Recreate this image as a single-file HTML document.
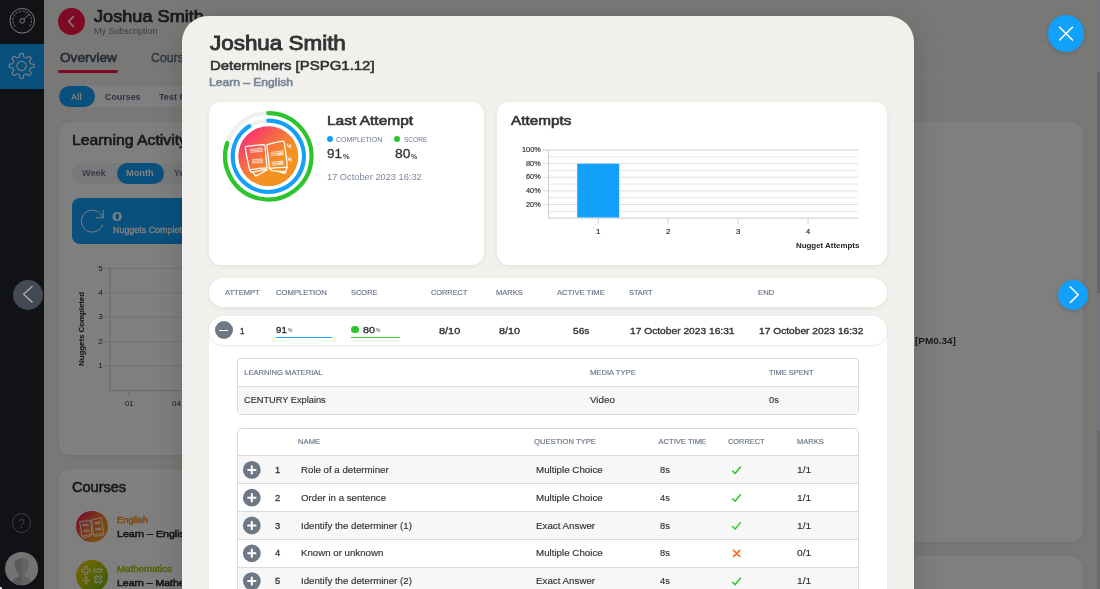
<!DOCTYPE html>
<html><head><meta charset="utf-8"><title>Joshua Smith</title><style>
html,body{margin:0;padding:0}
body{width:1100px;height:589px;overflow:hidden;position:relative;background:#f1f0ec;font-family:"Liberation Sans",sans-serif;}
.t{position:absolute;white-space:nowrap;line-height:1;transform-origin:0 0}
.a{position:absolute}
svg{position:absolute;overflow:visible}
#bg{position:absolute;left:0;top:0;width:1100px;height:589px;overflow:hidden;will-change:transform}
#ov{position:absolute;left:0;top:0;width:1100px;height:589px;background:rgba(0,0,0,.5)}
#modal{position:absolute;left:182px;top:16px;width:732px;height:640px;background:#f1f0ec;border-radius:26px;box-shadow:0 6px 30px rgba(0,0,0,.17)}
#mw{position:absolute;left:0;top:0;width:1100px;height:589px;overflow:hidden;will-change:transform}
.card{position:absolute;background:#fff;border-radius:12px;box-shadow:0 1px 4px rgba(0,0,0,.07)}
</style></head><body>
<div id="bg">
<div class="a" style="left:0;top:0;width:44px;height:589px;background:#20242c"></div>
<div class="a" style="left:0;top:44px;width:44px;height:45px;background:#13a0fa"></div>
<div class="a" style="left:44px;top:44.5px;width:1056px;height:1px;background:#fbfaf8"></div>
<div class="a" style="left:58px;top:71.5px;width:1030px;height:1px;background:#fbfaf8"></div>
<div class="a" style="left:58px;top:8px;width:27px;height:27px;border-radius:50%;background:#ff1446"></div>
<svg style="left:58px;top:8px" width="27" height="27"><path d="M15.3 8.6 L10.6 13.5 L15.3 18.4" fill="none" stroke="#fff" stroke-width="1.6" stroke-linecap="round" stroke-linejoin="round"/></svg>
<div class="t" style="left:94.10px;top:8.66px;font-size:16px;color:#333;transform:scaleX(1.1338);-webkit-text-stroke:0.72px #333;">Joshua Smith</div>
<div class="t" style="left:94.10px;top:26.90px;font-size:8.5px;color:#6f7c93;transform:scaleX(1.0502);">My Subscription</div>
<div class="t" style="left:59.60px;top:51.20px;font-size:13px;color:#4a5568;transform:scaleX(1.0503);-webkit-text-stroke:0.58px #4a5568;">Overview</div>
<div class="t" style="left:150.70px;top:51.20px;font-size:13px;color:#5d6a80;transform:scaleX(0.9462);-webkit-text-stroke:.35px #5d6a80;">Courses</div>
<div class="a" style="left:58px;top:70px;width:60px;height:3px;border-radius:2px;background:#ff1446"></div>
<div class="a" style="left:58.5px;top:86px;width:300px;height:21px;border-radius:11px;background:#fff;opacity:.95"></div>
<div class="a" style="left:58.8px;top:86px;width:36.3px;height:21.3px;border-radius:11px;background:#13a0fa"></div>
<div class="t" style="left:71.10px;top:92.98px;font-size:9px;color:#fff;font-weight:700;transform:scaleX(0.9478);">All</div>
<div class="t" style="left:104.70px;top:92.98px;font-size:9px;color:#5d6a80;font-weight:700;transform:scaleX(0.9858);">Courses</div>
<div class="t" style="left:159.40px;top:92.98px;font-size:9px;color:#5d6a80;font-weight:700;transform:scaleX(1.0044);">Test Practice</div>
<div class="card" style="left:58.5px;top:122px;width:840px;height:333px"></div>
<div class="t" style="left:71.50px;top:132.65px;font-size:14px;color:#333;transform:scaleX(1.1281);-webkit-text-stroke:0.63px #333;">Learning Activity</div>
<div class="a" style="left:71.5px;top:162.7px;width:140px;height:21.2px;border-radius:11px;background:#f2f2f2"></div>
<div class="t" style="left:82.20px;top:168.98px;font-size:9px;color:#6f7c93;font-weight:700;transform:scaleX(1.0151);">Week</div>
<div class="a" style="left:116.6px;top:162.7px;width:47.1px;height:21.2px;border-radius:11px;background:#13a0fa"></div>
<div class="t" style="left:126.30px;top:168.98px;font-size:9px;color:#fff;font-weight:700;transform:scaleX(1.0265);">Month</div>
<div class="t" style="left:174.40px;top:168.98px;font-size:9px;color:#6f7c93;font-weight:700;transform:scaleX(0.9779);">Year</div>
<div class="a" style="left:71.5px;top:198.4px;width:200px;height:46px;border-radius:8px;background:#13a0fa"></div>
<svg style="left:80px;top:209px" width="26" height="26"><path d="M22.9 8.8 A11 11 0 1 0 22.7 16" fill="none" stroke="#fff" stroke-width="1" stroke-linecap="round"/><path d="M16.2 8.8 L23.2 8.8 L23.2 1.3" fill="none" stroke="#fff" stroke-width="1" stroke-linecap="round" stroke-linejoin="round"/></svg>
<div class="t" style="left:112.20px;top:209.87px;font-size:13.5px;color:#fff;font-weight:700;transform:scaleX(1.3853);">0</div>
<div class="t" style="left:112.80px;top:225.58px;font-size:9px;color:#fff;transform:scaleX(0.9894);-webkit-text-stroke:.3px #fff;">Nuggets Completed</div>
<div class="t" style="left:98.30px;top:264.53px;font-size:8px;color:#333;">5</div>
<div class="t" style="left:98.30px;top:289.03px;font-size:8px;color:#333;">4</div>
<div class="t" style="left:98.30px;top:313.33px;font-size:8px;color:#333;">3</div>
<div class="t" style="left:98.30px;top:337.63px;font-size:8px;color:#333;">2</div>
<div class="t" style="left:98.30px;top:361.73px;font-size:8px;color:#333;">1</div>
<svg style="left:0;top:0" width="1100" height="589"><line x1="103" y1="268.4" x2="600" y2="268.4" stroke="#e0e4e9" stroke-width="1"/><line x1="103" y1="292.9" x2="600" y2="292.9" stroke="#e0e4e9" stroke-width="1"/><line x1="103" y1="317.2" x2="600" y2="317.2" stroke="#e0e4e9" stroke-width="1"/><line x1="103" y1="341.5" x2="600" y2="341.5" stroke="#e0e4e9" stroke-width="1"/><line x1="103" y1="365.6" x2="600" y2="365.6" stroke="#e0e4e9" stroke-width="1"/><line x1="109.8" y1="268.4" x2="109.8" y2="390.7" stroke="#ccd3db" stroke-width="1"/><line x1="109.8" y1="390.7" x2="600" y2="390.7" stroke="#ccd3db" stroke-width="1"/><line x1="128.9" y1="390.7" x2="128.9" y2="395" stroke="#ccd3db" stroke-width="1"/><line x1="176" y1="390.7" x2="176" y2="395" stroke="#ccd3db" stroke-width="1"/></svg>
<div class="t" style="left:124.60px;top:399.63px;font-size:8px;color:#333;transform:scaleX(0.9666);">01</div>
<div class="t" style="left:171.60px;top:399.63px;font-size:8px;color:#333;transform:scaleX(0.9890);">04</div>
<div class="t" style="left:82.4px;top:329.4px;font-size:8px;font-weight:700;color:#222;transform-origin:50% 50%;transform:translate(-50%,-50%) rotate(-90deg);letter-spacing:-0.1px">Nuggets Completed</div>
<div class="card" style="left:58.5px;top:469px;width:840px;height:200px"></div>
<div class="t" style="left:71.60px;top:480.05px;font-size:14px;color:#333;transform:scaleX(1.0378);-webkit-text-stroke:0.63px #333;">Courses</div>
<div class="a" style="left:76.3px;top:510.6px;width:31.8px;height:31.8px;border-radius:50%;background:linear-gradient(128deg,#f2185c 10%,#f46c34 42%,#f59320 72%)"></div>
<div class="a" style="left:76.3px;top:559.8px;width:31.8px;height:31.8px;border-radius:50%;background:linear-gradient(135deg,#e6c800 10%,#b8c400 50%,#6fb51c 95%)"></div>
<svg style="left:76.3px;top:510.6px" width="32" height="32" viewBox="-16 -16 32 32"><g transform="scale(1.16)" fill="none" stroke="#fff" stroke-width="0.85" stroke-linejoin="round" opacity=".9"><path d="M-10.6 -4.6 L-1.2 -5.6 L-0.2 6.2 L-8.6 8 Z"/><path d="M-0.4 -6.2 L8 -8 L10.2 5.4 L1.2 6.6 Z"/><path d="M-8.6 8 L-7.4 9.4 L-0.2 7.4 M1.2 6.6 L2 8 L9.6 7.2 L10.2 5.4"/><path d="M-8.4 -2.4h5.4M-8.2 -1.2h5.4M-7.4 2.6h5.2M-7.2 3.8h5.2M2 -3.6l5-.8M2.2 -2.4l5-.8M2.8 1.6l5.2-.8M3 2.8l5.2-.8"/></g></svg>
<svg style="left:76.3px;top:559.8px" width="32" height="32" viewBox="-16 -16 32 32"><g transform="scale(1.05)" fill="none" stroke="#fff" stroke-width="1.1" stroke-linejoin="round" opacity=".85"><path d="M-7 -9h2.4v2.6h2.6v2.4h-2.6v2.6h-2.4v-2.6h-2.6v-2.4h2.6z"/><rect x="1" y="-6.6" width="8.6" height="2.6" rx="1.3"/><path d="M-9.4 4.2h7.6"/><circle cx="-5.6" cy="1.8" r=".8"/><circle cx="-5.6" cy="6.6" r=".8"/><path d="M2.4 1.2l1.6-1.6 2 2 2-2 1.6 1.6-2 2 2 2-1.6 1.6-2-2-2 2-1.6-1.6 2-2z"/></g></svg>
<div class="t" style="left:117.10px;top:515.07px;font-size:9.6px;color:#f58c1c;transform:scaleX(0.9846);-webkit-text-stroke:0.43px #f58c1c;">English</div>
<div class="t" style="left:117.10px;top:528.99px;font-size:9.7px;color:#2e2e2e;transform:scaleX(1.0964);-webkit-text-stroke:.55px #2e2e2e;">Learn – English</div>
<div class="t" style="left:117.10px;top:564.37px;font-size:9.6px;color:#9cc810;transform:scaleX(1.0089);-webkit-text-stroke:0.43px #9cc810;">Mathematics</div>
<div class="t" style="left:117.10px;top:578.29px;font-size:9.7px;color:#2e2e2e;transform:scaleX(1.0809);-webkit-text-stroke:.55px #2e2e2e;">Learn – Mathematics</div>
<div class="card" style="left:905px;top:121.5px;width:178px;height:420px"></div>
<div class="card" style="left:905px;top:555.5px;width:178px;height:100px"></div>
<div class="t" style="left:914.60px;top:335.67px;font-size:9.6px;color:#333;font-weight:700;transform:scaleX(1.0336);">[PM0.34]</div>
<svg style="left:0;top:0" width="44" height="44"><g fill="none" stroke="#fff" stroke-width="1" opacity=".98">
<circle cx="22.2" cy="20.8" r="12.3"/><circle cx="22.2" cy="20.8" r="2.3"/><path d="M23.9 19.2 L29 14.4" stroke-linecap="round"/>
<path d="M15.2 26.6 A9.3 9.3 0 1 1 29.2 26.6" stroke-dasharray="2.2 1.4"/></g></svg>
<svg style="left:0;top:44px" width="44" height="45"><g fill="none" stroke="#fff" stroke-width="1.1" stroke-linejoin="round"><path d="M19.45 12.95 L19.95 9.61 L23.25 9.61 L23.75 12.95 L26.41 14.06 L29.12 12.04 L31.46 14.38 L29.44 17.09 L30.55 19.75 L33.89 20.25 L33.89 23.55 L30.55 24.05 L29.44 26.71 L31.46 29.42 L29.12 31.76 L26.41 29.74 L23.75 30.85 L23.25 34.19 L19.95 34.19 L19.45 30.85 L16.79 29.74 L14.08 31.76 L11.74 29.42 L13.76 26.71 L12.65 24.05 L9.31 23.55 L9.31 20.25 L12.65 19.75 L13.76 17.09 L11.74 14.38 L14.08 12.04 L16.79 14.06Z"/><circle cx="21.6" cy="21.9" r="4.7"/></g></svg>
<div class="a" style="left:11.6px;top:513.4px;width:17.4px;height:17.4px;border:1.3px solid #7c7c7c;border-radius:50%"></div>
<div class="t" style="left:18.30px;top:517.54px;font-size:12px;color:#7c7c7c;">?</div>
<svg style="left:5.3px;top:551.7px" width="33.2" height="33.2" viewBox="-16.6 -16.6 33.2 33.2"><defs><clipPath id="avc"><circle r="16.6"/></clipPath></defs>
<circle r="16.6" fill="#e6e6e6"/><g clip-path="url(#avc)"><path d="M-7 -5.5 C-7 -11.5 7 -11.5 7 -5.5 C7 1 4.5 4 2.6 5.4 L2.6 8 C6 9 9.5 10.5 10.5 17 L-10.5 17 C-9.5 10.5 -6 9 -2.6 8 L-2.6 5.4 C-4.5 4 -7 1 -7 -5.5Z" fill="#b2b2b4"/><path d="M0 -10 C3.5 -10 7 -9 7 -5.5 C7 1 4.5 4 2.6 5.4 L2.6 8 C6 9 9.5 10.5 10.5 17 L0 17Z" fill="#c6c6c6"/></g></svg>
<div class="a" style="left:1096.5px;top:0;width:3.5px;height:430.5px;background:#e6edf6"></div>
<div class="a" style="left:1096.5px;top:72px;width:3.5px;height:220.5px;background:#c4cede;border-radius:2px 0 0 2px"></div>
<div class="a" style="left:1096.5px;top:430.5px;width:3.5px;height:160px;background:#d8d8d4"></div>
</div>
<div id="ov"></div>
<div id="mw"><div id="modal"></div>
<div class="t" style="left:209.60px;top:32.90px;font-size:20.2px;color:#333;transform:scaleX(1.1105);-webkit-text-stroke:0.91px #333;">Joshua Smith</div>
<div class="t" style="left:209.60px;top:59.34px;font-size:13.3px;color:#333;transform:scaleX(1.1247);-webkit-text-stroke:0.60px #333;">Determiners [PSPG1.12]</div>
<div class="t" style="left:208.80px;top:76.69px;font-size:11px;color:#78859a;transform:scaleX(1.0976);-webkit-text-stroke:.62px #78859a;">Learn – English</div>
<div class="card" style="left:209.2px;top:102.4px;width:274.4px;height:163px"></div>
<div class="card" style="left:497.2px;top:102.4px;width:389.6px;height:163px"></div>
<svg style="left:0;top:0" width="1100" height="589"><defs><linearGradient id="eg" x1="0.1" y1="0.18" x2="0.8" y2="0.9"><stop offset="0.05" stop-color="#f83c6c"/><stop offset=".38" stop-color="#f66f40"/><stop offset=".68" stop-color="#f59122"/></linearGradient></defs>
<circle cx="268.3" cy="156.3" r="43.2" fill="none" stroke="#eef0f2" stroke-width="4"/>
<circle cx="268.3" cy="156.3" r="35.6" fill="none" stroke="#eef0f2" stroke-width="4"/>
<path d="M268.3 113.10000000000001 A43.2 43.2 0 1 1 227.21 142.95" fill="none" stroke="#2dc52d" stroke-width="4.2" stroke-linecap="round"/>
<path d="M268.3 120.70000000000002 A35.6 35.6 0 1 1 249.22 126.24" fill="none" stroke="#13a0fa" stroke-width="4.2" stroke-linecap="round"/>
<circle cx="268.3" cy="156.3" r="30" fill="url(#eg)"/>
<g transform="translate(268.3,156.3)" fill="none" stroke="#fff" stroke-width="1.25" stroke-linejoin="round" stroke-linecap="round">
<path d="M-21.6 -10 C-16 -10.9 -9 -11.5 -4.6 -11.7 Q-3.4 -11.7 -3.3 -10.4 C-2.8 -3 -2 5 -1.2 11.6 C-6 11.6 -13 12.4 -18.6 13.6 C-20.2 7 -22.2 -2 -23 -8.6 Q-23 -9.8 -21.6 -10Z"/>
<path d="M-0.2 -11.9 C4 -13 10 -14.4 14.4 -15.1 Q15.6 -15.2 15.9 -14 C17.2 -6 18.4 3 18.9 11 C13 10.8 6 11.4 1.2 12.1 C0.4 4 -0.6 -4 -1.4 -11.4 Q-1.2 -11.8 -0.2 -11.9Z"/>
<path d="M-18.6 13.6 L-17 16.1 L-1.8 12.8 M-15.4 15.8 L-12.6 19.8 L-0.8 13.4"/>
<path d="M1.2 12.1 L3.4 14.4 L17.2 15.5 L18.9 11 M9 14.9 L16.6 17.1 L17.7 15.4"/>
<path d="M-18 -7l11.8-1.1M-17.8 -5.5l11.8-1.1M-17.6 -4l11.8-1.1M-16 3.6l10.2-.9M-15.8 5.2l10.2-.9M-15.6 6.8l10.2-.9" stroke-width=".7"/>
<path d="M2.6 -3.9l12.4-1.4M2.8 -2.3l12.4-1.4M3 -0.7l12.4-1.4M3.6 6l11-1.4M3.8 7.5l11-1.4M4 9l11-1.4" stroke-width=".7"/>
<path d="M9.6 -4.6l2 4 1.4-3.6 1.6 3M10 5.2l1.8 3.4 1.4-3.4 1.2 2.4" stroke-width=".8"/>
<path d="M18.9 -12.3l1.5 3.5 1.5-3 .9 3.6M19.4 .6l1.4 3.9 1.5-3.2.8 3.9" stroke-width=".85"/>
</g></svg>
<div class="t" style="left:326.80px;top:113.64px;font-size:13.3px;color:#333;transform:scaleX(1.1647);-webkit-text-stroke:0.60px #333;">Last Attempt</div>
<div class="a" style="left:326.8px;top:136.4px;width:5.8px;height:5.8px;border-radius:50%;background:#13a0fa"></div>
<div class="t" style="left:335.90px;top:136.22px;font-size:7.3px;color:#6a7689;transform:scaleX(0.9572);">COMPLETION</div>
<div class="a" style="left:394.4px;top:136.4px;width:5.8px;height:5.8px;border-radius:50%;background:#2dc52d"></div>
<div class="t" style="left:403.50px;top:136.22px;font-size:7.3px;color:#6a7689;transform:scaleX(0.8975);">SCORE</div>
<div class="t" style="left:326.80px;top:148.06px;font-size:12.8px;color:#333;transform:scaleX(1.0466);-webkit-text-stroke:.3px #333;">91</div>
<div class="t" style="left:343.00px;top:152.64px;font-size:7.4px;color:#444;font-weight:700;">%</div>
<div class="t" style="left:394.70px;top:148.06px;font-size:12.8px;color:#333;transform:scaleX(1.0888);-webkit-text-stroke:.3px #333;">80</div>
<div class="t" style="left:411.00px;top:152.64px;font-size:7.4px;color:#444;font-weight:700;transform:scaleX(0.9422);">%</div>
<div class="t" style="left:326.80px;top:172.67px;font-size:8.9px;color:#7a879b;transform:scaleX(1.0435);">17 October 2023 16:32</div>
<div class="t" style="left:510.90px;top:113.74px;font-size:13.3px;color:#333;transform:scaleX(1.1491);-webkit-text-stroke:0.60px #333;">Attempts</div>
<svg style="left:0;top:0" width="1100" height="589"><line x1="548.4" y1="211.30" x2="858.2" y2="211.30" stroke="#e6e9ed" stroke-width="1"/><line x1="542.7" y1="204.50" x2="858.2" y2="204.50" stroke="#dce0e6" stroke-width="1"/><line x1="548.4" y1="197.70" x2="858.2" y2="197.70" stroke="#e6e9ed" stroke-width="1"/><line x1="542.7" y1="190.90" x2="858.2" y2="190.90" stroke="#dce0e6" stroke-width="1"/><line x1="548.4" y1="184.10" x2="858.2" y2="184.10" stroke="#e6e9ed" stroke-width="1"/><line x1="542.7" y1="177.30" x2="858.2" y2="177.30" stroke="#dce0e6" stroke-width="1"/><line x1="548.4" y1="170.50" x2="858.2" y2="170.50" stroke="#e6e9ed" stroke-width="1"/><line x1="542.7" y1="163.70" x2="858.2" y2="163.70" stroke="#dce0e6" stroke-width="1"/><line x1="548.4" y1="156.90" x2="858.2" y2="156.90" stroke="#e6e9ed" stroke-width="1"/><line x1="542.7" y1="150.10" x2="858.2" y2="150.10" stroke="#c8cfd8" stroke-width="1"/><rect x="577.2" y="163.70" width="42" height="53.90" fill="#13a0fa"/><line x1="548.4" y1="150.1" x2="548.4" y2="218.1" stroke="#c4ccd6" stroke-width="1"/><line x1="547.9" y1="218.1" x2="858.2" y2="218.1" stroke="#c4ccd6" stroke-width="1"/><line x1="598.3" y1="218.6" x2="598.3" y2="224.1" stroke="#ccd3dc" stroke-width="1"/><line x1="668.2" y1="218.6" x2="668.2" y2="224.1" stroke="#ccd3dc" stroke-width="1"/><line x1="738.1" y1="218.6" x2="738.1" y2="224.1" stroke="#ccd3dc" stroke-width="1"/><line x1="808" y1="218.6" x2="808" y2="224.1" stroke="#ccd3dc" stroke-width="1"/></svg>
<div class="t" style="left:525.85px;top:200.63px;font-size:8px;color:#333;transform:scaleX(0.9150);-webkit-text-stroke:.2px #333;">20%</div>
<div class="t" style="left:525.85px;top:187.03px;font-size:8px;color:#333;transform:scaleX(0.9150);-webkit-text-stroke:.2px #333;">40%</div>
<div class="t" style="left:525.85px;top:173.43px;font-size:8px;color:#333;transform:scaleX(0.9150);-webkit-text-stroke:.2px #333;">60%</div>
<div class="t" style="left:525.85px;top:159.83px;font-size:8px;color:#333;transform:scaleX(0.9150);-webkit-text-stroke:.2px #333;">80%</div>
<div class="t" style="left:521.78px;top:146.23px;font-size:8px;color:#333;transform:scaleX(0.9150);-webkit-text-stroke:.2px #333;">100%</div>
<div class="t" style="left:596.10px;top:227.73px;font-size:8px;color:#333;-webkit-text-stroke:.2px #333;">1</div>
<div class="t" style="left:666.00px;top:227.73px;font-size:8px;color:#333;-webkit-text-stroke:.2px #333;">2</div>
<div class="t" style="left:735.90px;top:227.73px;font-size:8px;color:#333;-webkit-text-stroke:.2px #333;">3</div>
<div class="t" style="left:805.80px;top:227.73px;font-size:8px;color:#333;-webkit-text-stroke:.2px #333;">4</div>
<div class="t" style="left:796.40px;top:242.00px;font-size:7.8px;color:#222;font-weight:700;transform:scaleX(1.0122);">Nugget Attempts</div>
<div class="card" style="left:209.2px;top:278.2px;width:677.6px;height:28.6px;border-radius:14.3px"></div>
<div class="t" style="left:225.20px;top:289.17px;font-size:7.6px;color:#6a7689;transform:scaleX(0.9943);-webkit-text-stroke:.18px #6a7689;">ATTEMPT</div>
<div class="t" style="left:275.90px;top:289.17px;font-size:7.6px;color:#6a7689;transform:scaleX(1.0110);-webkit-text-stroke:.18px #6a7689;">COMPLETION</div>
<div class="t" style="left:350.50px;top:289.17px;font-size:7.6px;color:#6a7689;transform:scaleX(0.9805);-webkit-text-stroke:.18px #6a7689;">SCORE</div>
<div class="t" style="left:431.00px;top:289.17px;font-size:7.6px;color:#6a7689;transform:scaleX(0.9687);-webkit-text-stroke:.18px #6a7689;">CORRECT</div>
<div class="t" style="left:496.20px;top:289.17px;font-size:7.6px;color:#6a7689;transform:scaleX(0.9916);-webkit-text-stroke:.18px #6a7689;">MARKS</div>
<div class="t" style="left:557.20px;top:289.17px;font-size:7.6px;color:#6a7689;transform:scaleX(1.0047);-webkit-text-stroke:.18px #6a7689;">ACTIVE TIME</div>
<div class="t" style="left:628.90px;top:289.17px;font-size:7.6px;color:#6a7689;transform:scaleX(0.9707);-webkit-text-stroke:.18px #6a7689;">START</div>
<div class="t" style="left:758.10px;top:289.17px;font-size:7.6px;color:#6a7689;-webkit-text-stroke:.18px #6a7689;">END</div>
<div class="a" style="left:209.2px;top:330px;width:677.6px;height:300px;background:#fff"></div>
<div class="a" style="left:209.2px;top:315.8px;width:677.6px;height:29.6px;border-radius:14.8px;background:#fff;box-shadow:0 1px 3px rgba(0,0,0,.10)"></div>
<div class="a" style="left:214.5px;top:321.2px;width:18.2px;height:18.2px;border-radius:50%;background:#6d7885"></div>
<div class="a" style="left:219.2px;top:329.6px;width:9.2px;height:1.8px;border-radius:1px;background:#fff"></div>
<div class="t" style="left:240.00px;top:326.04px;font-size:9.4px;color:#333;transform:scaleX(0.8609);-webkit-text-stroke:.36px #333;">1</div>
<div class="t" style="left:275.90px;top:324.74px;font-size:9.4px;color:#333;transform:scaleX(1.0330);-webkit-text-stroke:.36px #333;">91</div>
<div class="t" style="left:287.80px;top:327.45px;font-size:6.2px;color:#777;font-weight:700;transform:scaleX(0.8162);">%</div>
<div class="a" style="left:275.9px;top:336.5px;width:55.8px;height:1.4px;background:#27a8fb"></div>
<div class="a" style="left:350.9px;top:325.7px;width:7.8px;height:7.8px;border-radius:50%;background:#2dc52d"></div>
<div class="t" style="left:363.00px;top:324.74px;font-size:9.4px;color:#333;transform:scaleX(1.1478);-webkit-text-stroke:.36px #333;">80</div>
<div class="t" style="left:375.80px;top:327.45px;font-size:6.2px;color:#777;font-weight:700;transform:scaleX(0.7981);">%</div>
<div class="a" style="left:350.5px;top:336.5px;width:49.5px;height:1.4px;background:#3cc93c"></div>
<div class="t" style="left:438.90px;top:326.04px;font-size:9.4px;color:#333;transform:scaleX(1.1644);-webkit-text-stroke:.36px #333;">8/10</div>
<div class="t" style="left:498.80px;top:326.04px;font-size:9.4px;color:#333;transform:scaleX(1.1589);-webkit-text-stroke:.36px #333;">8/10</div>
<div class="t" style="left:572.90px;top:326.04px;font-size:9.4px;color:#333;transform:scaleX(1.0822);-webkit-text-stroke:.36px #333;">56s</div>
<div class="t" style="left:629.50px;top:326.04px;font-size:9.4px;color:#333;transform:scaleX(1.0899);-webkit-text-stroke:.36px #333;">17 October 2023 16:31</div>
<div class="t" style="left:758.50px;top:326.04px;font-size:9.4px;color:#333;transform:scaleX(1.0889);-webkit-text-stroke:.36px #333;">17 October 2023 16:32</div>
<div class="a" style="left:237px;top:358.4px;width:620.2px;height:54.9px;border:1px solid #d6dae2;border-radius:4px;background:#fff;overflow:hidden"><div class="a" style="left:0;top:26.3px;width:621px;height:29px;background:#f7f7f7;border-top:1px solid #d6dae2"></div></div>
<div class="t" style="left:244.20px;top:369.07px;font-size:7.6px;color:#6a7689;-webkit-text-stroke:.18px #6a7689;">LEARNING MATERIAL</div>
<div class="t" style="left:589.60px;top:369.07px;font-size:7.6px;color:#6a7689;transform:scaleX(1.0072);-webkit-text-stroke:.18px #6a7689;">MEDIA TYPE</div>
<div class="t" style="left:769.30px;top:369.07px;font-size:7.6px;color:#6a7689;transform:scaleX(0.9758);-webkit-text-stroke:.18px #6a7689;">TIME SPENT</div>
<div class="t" style="left:244.20px;top:396.01px;font-size:9.2px;color:#333;transform:scaleX(1.0041);-webkit-text-stroke:.16px #333;">CENTURY Explains</div>
<div class="t" style="left:589.60px;top:396.01px;font-size:9.2px;color:#333;transform:scaleX(1.0658);-webkit-text-stroke:.16px #333;">Video</div>
<div class="t" style="left:769.30px;top:396.01px;font-size:9.2px;color:#333;transform:scaleX(1.0086);-webkit-text-stroke:.16px #333;">0s</div>
<div class="a" style="left:237px;top:428.2px;width:620.2px;height:240px;border:1px solid #d6dae2;border-radius:4px;background:#fff;overflow:hidden"><div class="a" style="left:0;top:26.30px;width:621px;height:27.8px;background:#f7f7f7;border-top:1px solid #d6dae2"></div><div class="a" style="left:0;top:54.10px;width:621px;height:27.8px;background:#fff;border-top:1px solid #d6dae2"></div><div class="a" style="left:0;top:81.90px;width:621px;height:27.8px;background:#f7f7f7;border-top:1px solid #d6dae2"></div><div class="a" style="left:0;top:109.70px;width:621px;height:27.8px;background:#fff;border-top:1px solid #d6dae2"></div><div class="a" style="left:0;top:137.50px;width:621px;height:27.8px;background:#f7f7f7;border-top:1px solid #d6dae2"></div><div class="a" style="left:0;top:165.30px;width:621px;height:27.8px;background:#fff;border-top:1px solid #d6dae2"></div></div>
<div class="t" style="left:298.20px;top:438.37px;font-size:7.6px;color:#6a7689;transform:scaleX(1.0110);-webkit-text-stroke:.18px #6a7689;">NAME</div>
<div class="t" style="left:533.60px;top:438.37px;font-size:7.6px;color:#6a7689;transform:scaleX(1.0062);-webkit-text-stroke:.18px #6a7689;">QUESTION TYPE</div>
<div class="t" style="left:658.50px;top:438.37px;font-size:7.6px;color:#6a7689;-webkit-text-stroke:.18px #6a7689;">ACTIVE TIME</div>
<div class="t" style="left:727.60px;top:438.37px;font-size:7.6px;color:#6a7689;transform:scaleX(0.9740);-webkit-text-stroke:.18px #6a7689;">CORRECT</div>
<div class="t" style="left:796.70px;top:438.37px;font-size:7.6px;color:#6a7689;transform:scaleX(0.9879);-webkit-text-stroke:.18px #6a7689;">MARKS</div>
<div class="t" style="left:274.50px;top:465.91px;font-size:9.2px;color:#333;transform:scaleX(1.0164);-webkit-text-stroke:.3px #333;">1</div>
<div class="t" style="left:300.90px;top:465.91px;font-size:9.2px;color:#333;transform:scaleX(1.0540);-webkit-text-stroke:.16px #333;">Role of a determiner</div>
<div class="t" style="left:535.50px;top:465.91px;font-size:9.2px;color:#333;transform:scaleX(1.0620);-webkit-text-stroke:.16px #333;">Multiple Choice</div>
<div class="t" style="left:659.60px;top:465.91px;font-size:9.2px;color:#333;transform:scaleX(1.0189);-webkit-text-stroke:.16px #333;">8s</div>
<div class="t" style="left:797.00px;top:465.91px;font-size:9.2px;color:#333;transform:scaleX(1.1104);-webkit-text-stroke:.16px #333;">1/1</div>
<div class="t" style="left:274.50px;top:493.71px;font-size:9.2px;color:#333;transform:scaleX(1.0164);-webkit-text-stroke:.3px #333;">2</div>
<div class="t" style="left:300.90px;top:493.71px;font-size:9.2px;color:#333;transform:scaleX(1.0540);-webkit-text-stroke:.16px #333;">Order in a sentence</div>
<div class="t" style="left:535.50px;top:493.71px;font-size:9.2px;color:#333;transform:scaleX(1.0620);-webkit-text-stroke:.16px #333;">Multiple Choice</div>
<div class="t" style="left:659.60px;top:493.71px;font-size:9.2px;color:#333;transform:scaleX(1.0189);-webkit-text-stroke:.16px #333;">4s</div>
<div class="t" style="left:797.00px;top:493.71px;font-size:9.2px;color:#333;transform:scaleX(1.1104);-webkit-text-stroke:.16px #333;">1/1</div>
<div class="t" style="left:274.50px;top:521.51px;font-size:9.2px;color:#333;transform:scaleX(1.0164);-webkit-text-stroke:.3px #333;">3</div>
<div class="t" style="left:300.90px;top:521.51px;font-size:9.2px;color:#333;transform:scaleX(1.0540);-webkit-text-stroke:.16px #333;">Identify the determiner (1)</div>
<div class="t" style="left:535.50px;top:521.51px;font-size:9.2px;color:#333;transform:scaleX(1.0620);-webkit-text-stroke:.16px #333;">Exact Answer</div>
<div class="t" style="left:659.60px;top:521.51px;font-size:9.2px;color:#333;transform:scaleX(1.0189);-webkit-text-stroke:.16px #333;">8s</div>
<div class="t" style="left:797.00px;top:521.51px;font-size:9.2px;color:#333;transform:scaleX(1.1104);-webkit-text-stroke:.16px #333;">1/1</div>
<div class="t" style="left:274.50px;top:549.31px;font-size:9.2px;color:#333;transform:scaleX(1.0164);-webkit-text-stroke:.3px #333;">4</div>
<div class="t" style="left:300.90px;top:549.31px;font-size:9.2px;color:#333;transform:scaleX(1.0540);-webkit-text-stroke:.16px #333;">Known or unknown</div>
<div class="t" style="left:535.50px;top:549.31px;font-size:9.2px;color:#333;transform:scaleX(1.0620);-webkit-text-stroke:.16px #333;">Multiple Choice</div>
<div class="t" style="left:659.60px;top:549.31px;font-size:9.2px;color:#333;transform:scaleX(1.0189);-webkit-text-stroke:.16px #333;">8s</div>
<div class="t" style="left:797.00px;top:549.31px;font-size:9.2px;color:#333;transform:scaleX(1.1104);-webkit-text-stroke:.16px #333;">0/1</div>
<div class="t" style="left:274.50px;top:577.11px;font-size:9.2px;color:#333;transform:scaleX(1.0164);-webkit-text-stroke:.3px #333;">5</div>
<div class="t" style="left:300.90px;top:577.11px;font-size:9.2px;color:#333;transform:scaleX(1.0540);-webkit-text-stroke:.16px #333;">Identify the determiner (2)</div>
<div class="t" style="left:535.50px;top:577.11px;font-size:9.2px;color:#333;transform:scaleX(1.0620);-webkit-text-stroke:.16px #333;">Exact Answer</div>
<div class="t" style="left:659.60px;top:577.11px;font-size:9.2px;color:#333;transform:scaleX(1.0189);-webkit-text-stroke:.16px #333;">4s</div>
<div class="t" style="left:797.00px;top:577.11px;font-size:9.2px;color:#333;transform:scaleX(1.1104);-webkit-text-stroke:.16px #333;">1/1</div>
<div class="t" style="left:274.50px;top:604.91px;font-size:9.2px;color:#333;transform:scaleX(1.0164);-webkit-text-stroke:.3px #333;">6</div>
<div class="t" style="left:300.90px;top:604.91px;font-size:9.2px;color:#333;transform:scaleX(1.0540);-webkit-text-stroke:.16px #333;">Choose the determiner</div>
<div class="t" style="left:535.50px;top:604.91px;font-size:9.2px;color:#333;transform:scaleX(1.0620);-webkit-text-stroke:.16px #333;">Multiple Choice</div>
<div class="t" style="left:659.60px;top:604.91px;font-size:9.2px;color:#333;transform:scaleX(1.0189);-webkit-text-stroke:.16px #333;">6s</div>
<div class="t" style="left:797.00px;top:604.91px;font-size:9.2px;color:#333;transform:scaleX(1.1104);-webkit-text-stroke:.16px #333;">1/1</div>
<svg style="left:0;top:0" width="1100" height="589"><circle cx="251.8" cy="469.90" r="8.9" fill="#6d7885"/><path d="M248.1 469.90h7.4M251.8 466.20v7.4" stroke="#fff" stroke-width="2" stroke-linecap="round"/><path d="M732.7 471.00 l2.4 2.5 l5.3-6.5" fill="none" stroke="#2dc52d" stroke-width="1.5" stroke-linecap="round" stroke-linejoin="round"/><circle cx="251.8" cy="497.70" r="8.9" fill="#6d7885"/><path d="M248.1 497.70h7.4M251.8 494.00v7.4" stroke="#fff" stroke-width="2" stroke-linecap="round"/><path d="M732.7 498.80 l2.4 2.5 l5.3-6.5" fill="none" stroke="#2dc52d" stroke-width="1.5" stroke-linecap="round" stroke-linejoin="round"/><circle cx="251.8" cy="525.50" r="8.9" fill="#6d7885"/><path d="M248.1 525.50h7.4M251.8 521.80v7.4" stroke="#fff" stroke-width="2" stroke-linecap="round"/><path d="M732.7 526.60 l2.4 2.5 l5.3-6.5" fill="none" stroke="#2dc52d" stroke-width="1.5" stroke-linecap="round" stroke-linejoin="round"/><circle cx="251.8" cy="553.30" r="8.9" fill="#6d7885"/><path d="M248.1 553.30h7.4M251.8 549.60v7.4" stroke="#fff" stroke-width="2" stroke-linecap="round"/><path d="M733.6 550.30 l6.1 6.1 M739.7 550.30 l-6.1 6.1" fill="none" stroke="#ff6a1a" stroke-width="1.7" stroke-linecap="round"/><circle cx="251.8" cy="581.10" r="8.9" fill="#6d7885"/><path d="M248.1 581.10h7.4M251.8 577.40v7.4" stroke="#fff" stroke-width="2" stroke-linecap="round"/><path d="M732.7 582.20 l2.4 2.5 l5.3-6.5" fill="none" stroke="#2dc52d" stroke-width="1.5" stroke-linecap="round" stroke-linejoin="round"/><circle cx="251.8" cy="608.90" r="8.9" fill="#6d7885"/><path d="M248.1 608.90h7.4M251.8 605.20v7.4" stroke="#fff" stroke-width="2" stroke-linecap="round"/><path d="M732.7 610.00 l2.4 2.5 l5.3-6.5" fill="none" stroke="#2dc52d" stroke-width="1.5" stroke-linecap="round" stroke-linejoin="round"/></svg>
</div>
<div class="a" style="left:-1.5px;top:587.2px;width:3px;height:3px;border-radius:50%;background:#fff"></div>
<div class="a" style="left:13px;top:279.8px;width:30px;height:30px;border-radius:50%;background:#434a54"></div>
<div class="a" style="left:1058.2px;top:279.8px;width:30px;height:30px;border-radius:50%;background:#13a0fa;box-shadow:0 1px 4px rgba(0,0,0,.18)"></div>
<svg style="left:0;top:0" width="60" height="589"><path d="M32.1 286.5 L23.6 294.3 L32.1 302.1" fill="none" stroke="#a8a8a8" stroke-width="1.5" stroke-linecap="round" stroke-linejoin="round"/></svg>
<div class="a" style="left:1047.8px;top:15.4px;width:36.4px;height:36.4px;border-radius:50%;background:#13a0fa;box-shadow:0 1px 4px rgba(0,0,0,.18)"></div>
<svg style="left:0;top:0" width="1100" height="589"><path d="M1059.6 27.2 L1072.4 40 M1072.4 27.2 L1059.6 40" fill="none" stroke="#fff" stroke-width="1.6" stroke-linecap="round"/><path d="M1070.4 287 L1078.2 294.7 L1070.4 302.4" fill="none" stroke="#fff" stroke-width="1.6" stroke-linecap="round" stroke-linejoin="round"/></svg>
</body></html>
